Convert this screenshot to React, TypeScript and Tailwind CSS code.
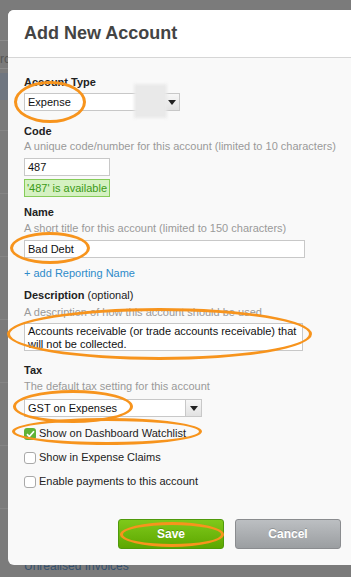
import React from "react";

function Ring({ className }: { className: string }) {
  return <div className={"pointer-events-none absolute rounded-[50%] border-[3px] border-[#f7941d] " + className} />;
}

function Arrow() {
  return (
    <div className="flex w-[16px] items-center justify-center border-l border-[#c8c8c8] bg-gradient-to-b from-[#f7f7f7] to-[#e2e2e2]">
      <svg width="8" height="5" viewBox="0 0 8 5">
        <path d="M0 0h8L4 5z" fill="#222" />
      </svg>
    </div>
  );
}

function Check({ checked, label }: { checked?: boolean; label: string }) {
  return (
    <label className="flex h-[13px] items-center gap-[3px] text-[11px] text-[#222]">
      {checked ? (
        <span className="flex h-[12px] w-[12px] items-center justify-center rounded-[3px] bg-[#5fb336]">
          <svg width="9" height="8" viewBox="0 0 9 8">
            <path d="M1 4.2l2.3 2.3L8 1.2" fill="none" stroke="#fff" strokeWidth="1.7" />
          </svg>
        </span>
      ) : (
        <span className="h-[12px] w-[12px] rounded-[3px] border border-[#a9a9a9] bg-white" />
      )}
      <span>{label}</span>
    </label>
  );
}

export default function App() {
  return (
    <div className="relative flex h-[577px] w-[351px] overflow-hidden bg-[#7b7b7b] font-['Liberation_Sans',Arial,sans-serif]">
      {/* page behind the overlay */}
      <div className="flex w-[8px] shrink-0 flex-col">
        <div className="mt-[40px] h-px bg-[#8c8c8c]" />
        <div className="mt-[12px] text-[12px] leading-[13px] text-[#555]">rc</div>
        <div className="mt-[2px] h-px bg-[#8c8c8c]" />
        <div className="mt-[4px] h-[27px] bg-[#6f7680]" />
        <div className="mt-[30px] h-px bg-[#858585]" />
        <div className="mt-[62px] h-px bg-[#858585]" />
        <div className="mt-[62px] h-px bg-[#858585]" />
        <div className="mt-[62px] h-px bg-[#858585]" />
        <div className="mt-[62px] h-px bg-[#858585]" />
        <div className="mt-[62px] h-px bg-[#858585]" />
        <div className="mt-[62px] h-px bg-[#858585]" />
      </div>

      <div className="flex w-[370px] shrink-0 flex-col">
        <div className="mt-[10px] h-[555px] overflow-hidden rounded-[6px] bg-[#f9f9f9]">
          <div className="flex h-[48px] items-center border-b border-[#d6d6d6] bg-white px-[16px]">
            <h1 className="text-[18px] font-bold text-[#444]">Add New Account</h1>
          </div>

          <div className="px-[16px] pt-[18px] text-[11px] leading-[13px]">
            <div className="font-bold text-[#222]">Account Type</div>
            <div className="mt-[4px] flex h-[18px] w-[156px] border border-[#c8c8c8] bg-white">
              <div className="flex-1 pl-[3px] leading-[16px] text-[#111]">Expense</div>
              <Arrow />
            </div>

            <div className="mt-[14px] font-bold text-[#222]">Code</div>
            <div className="mt-[2px] text-[#999]">A unique code/number for this account (limited to 10 characters)</div>
            <div className="mt-[5px] h-[18px] w-[86px] border border-[#c8c8c8] bg-white pl-[3px] leading-[16px] text-[#111]">487</div>
            <div className="mt-[3px] h-[18px] w-fit whitespace-nowrap border border-[#86cc59] bg-[#d5f1c2] px-[2px] leading-[16px] text-[#3b9a17]">'487' is available</div>

            <div className="mt-[9px] font-bold text-[#222]">Name</div>
            <div className="mt-[3px] text-[#999]">A short title for this account (limited to 150 characters)</div>
            <div className="mt-[5px] h-[18px] w-[281px] border border-[#c8c8c8] bg-white pl-[3px] leading-[16px] text-[#111]">Bad Debt</div>
            <div className="mt-[9px] text-[#2e8bc9]">+ add Reporting Name</div>

            <div className="mt-[9px] text-[#222]">
              <span className="font-bold">Description</span> (optional)
            </div>
            <div className="mt-[4px] text-[#999]">A description of how this account should be used</div>
            <div className="mt-[4px] h-[28px] w-[279px] border border-[#c8c8c8] bg-white pl-[3px] pt-px text-[#111]">
              Accounts receivable (or trade accounts receivable) that will not be collected.
            </div>

            <div className="mt-[13px] font-bold text-[#222]">Tax</div>
            <div className="mt-[3px] text-[#999]">The default tax setting for this account</div>
            <div className="mt-[6px] flex h-[18px] w-[178px] border border-[#c8c8c8] bg-white">
              <div className="flex-1 pl-[3px] leading-[16px] text-[#111]">GST on Expenses</div>
              <Arrow />
            </div>

            <div className="mt-[10px] flex flex-col gap-[11px]">
              <Check checked label="Show on Dashboard Watchlist" />
              <Check label="Show in Expense Claims" />
              <Check label="Enable payments to this account" />
            </div>

            <div className="mt-[31px] flex gap-[11px] pl-[94px]">
              <button className="h-[30px] w-[106px] rounded-[3px] border border-[#4f9a0b] bg-gradient-to-b from-[#7fc91a] to-[#5da700] text-[12px] font-bold text-white [text-shadow:0_-1px_0_rgba(0,0,0,0.2)]">
                Save
              </button>
              <button className="h-[30px] w-[106px] rounded-[3px] border border-[#8a8c8f] bg-gradient-to-b from-[#bcbfc2] to-[#9b9ea1] text-[12px] font-bold text-white [text-shadow:0_-1px_0_rgba(0,0,0,0.2)]">
                Cancel
              </button>
            </div>
          </div>
        </div>
        <div className="h-[12px] overflow-hidden pl-[16px]">
          <div className="-mt-[6px] text-[12px] leading-[14px] text-[#34506e]">Unrealised Invoices</div>
        </div>
      </div>

      {/* blurred patch over the select */}
      <div className="absolute left-[134px] top-[84px] h-[34px] w-[33px] bg-[#e9e9e9] blur-[1.5px]" />

      {/* annotation rings */}
      <Ring className="left-[14px] top-[81px] h-[42px] w-[72px]" />
      <Ring className="left-[10px] top-[232px] h-[32px] w-[80px]" />
      <Ring className="left-[7px] top-[308px] h-[52px] w-[305px]" />
      <Ring className="left-[13px] top-[390px] h-[33px] w-[120px]" />
      <Ring className="left-[12px] top-[418px] h-[27px] w-[190px]" />
      <Ring className="left-[120px] top-[522px] h-[25px] w-[104px]" />
    </div>
  );
}
